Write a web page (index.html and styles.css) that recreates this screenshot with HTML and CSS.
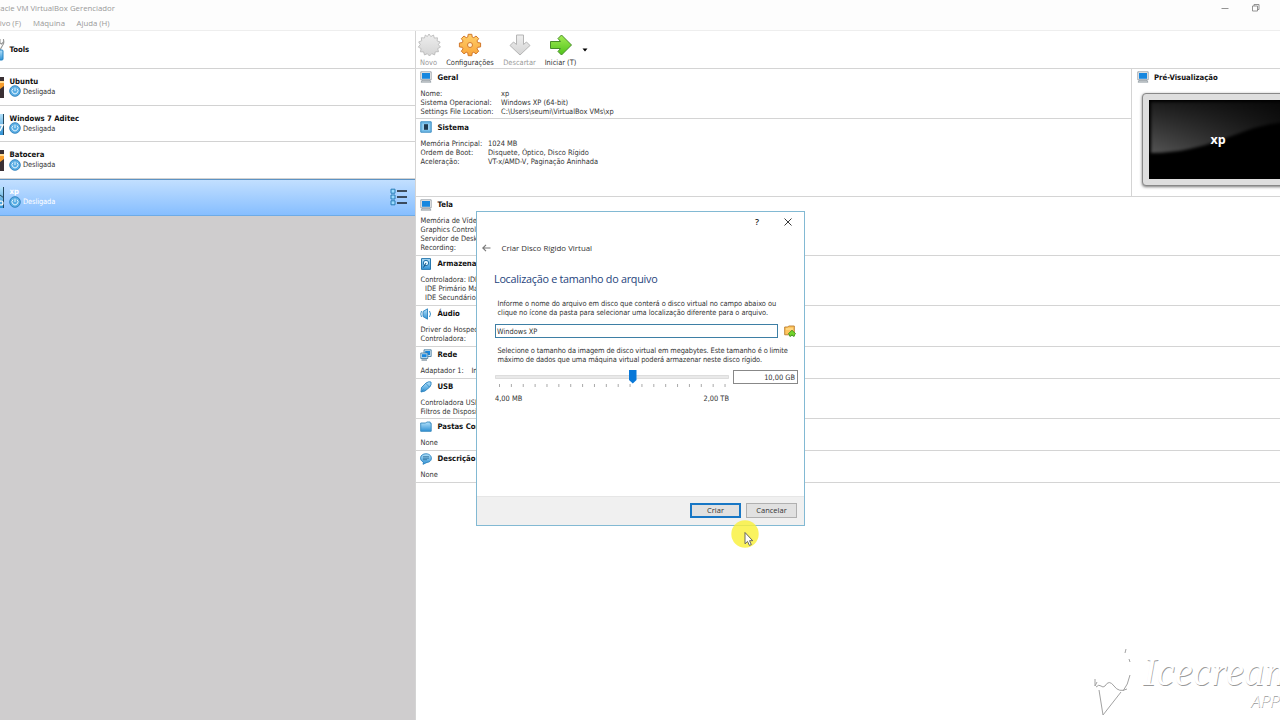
FILE: index.html
```
<!DOCTYPE html>
<html lang="pt-BR">
<head>
    <meta charset="UTF-8">
    <title>Oracle VM VirtualBox Gerenciador</title>
    <link rel="stylesheet" href="styles.css">
</head>
<body>
    <svg class="defs" width="0" height="0">
        <defs>
            <linearGradient id="blue" x1="0" y1="0" x2="0" y2="1"><stop offset="0" stop-color="#b5e2fb"/><stop offset="1" stop-color="#2f91d4"/></linearGradient>
            <linearGradient id="orange" x1="0" y1="0" x2="0" y2="1"><stop offset="0" stop-color="#ffd06b"/><stop offset="1" stop-color="#f9a53a"/></linearGradient>
            <linearGradient id="green" x1="0" y1="0" x2="0" y2="1"><stop offset="0" stop-color="#a4ec55"/><stop offset="1" stop-color="#4fc31a"/></linearGradient>
            <linearGradient id="grey" x1="0" y1="0" x2="0" y2="1"><stop offset="0" stop-color="#eee"/><stop offset="1" stop-color="#d4d4d4"/></linearGradient>
            <linearGradient id="glare" x1="0" y1="0" x2="0" y2="1"><stop offset="0" stop-color="#1c1c1c"/><stop offset="1" stop-color="#555"/></linearGradient>
            <linearGradient id="fade" x1="0" y1="0" x2="1" y2="0"><stop offset="0" stop-color="#000" stop-opacity="0"/><stop offset="1" stop-color="#000" stop-opacity=".8"/></linearGradient>
        </defs>
        <symbol id="power" viewBox="0 0 12 12">
            <circle cx="6" cy="6" r="5.3" fill="#5aaee4" stroke="#2d7fbb" stroke-width=".9"/>
            <path d="M4 3.6a3 3 0 1 0 4 0M6 2.6V6" fill="none" stroke="#e4f4ff" stroke-width="1"/>
        </symbol>
        <symbol id="monitor" viewBox="0 0 12 12">
            <path d="M.8.8h10.400v8H.8z" fill="#f4f4f4" stroke="#8a949c" stroke-width=".8"/>
            <path d="M2 2h8v5.800H2z" fill="#1787df"/>
            <path d="M2 9.300h8l1 1.900H1z" fill="#c8cdd0" stroke="#7e8a92" stroke-width=".6"/>
        </symbol>
    </svg>

    <div class="window">
        <header class="titlebar">
            <div class="title">Oracle VM VirtualBox Gerenciador</div>
            <svg class="win-buttons" width="40" height="10" viewBox="0 0 40 10"><path d="M.5 5.500h7M31.500 3h5v5h-5zM33 3V1.500h5v5h-1.500" fill="none" stroke="#888" stroke-width=".9"/></svg>
        </header>
        <nav class="menubar">
            <span class="menu-file">Arquivo (F)</span>
            <span class="menu-machine">Máquina</span>
            <span>Ajuda (H)</span>
        </nav>

        <main class="main">
            <aside class="sidebar">
                <div class="vm tools">
                    <svg class="vm-icon" width="5" height="24" viewBox="0 0 5 24"><path d="M0 1v4l1.500 1L3.500 4V1M3.500 2q1 3-1 5.500L0 12" fill="none" stroke="#999" stroke-width="1.100"/><rect x="-5" y="12" width="8" height="10" rx="1" fill="url(#blue)" stroke="#2584c4"/></svg>
                    <div class="vm-name">Tools</div>
                </div>
                <div class="vm">
                    <svg class="vm-icon" width="5" height="24" viewBox="0 0 5 24"><path d="M0 2h4v21H0z" fill="#3a3034"/><path d="M0 6h4v5L0 14z" fill="#f79d2c"/><path d="M0 6h4v2H0z" fill="#ffdc94"/></svg>
                    <div><div class="vm-name">Ubuntu</div><div class="vm-state"><svg width="12" height="12"><use href="#power"/></svg>Desligada</div></div>
                </div>
                <div class="vm">
                    <svg class="vm-icon" width="5" height="24" viewBox="0 0 5 24"><path d="M0 2h4v21H0z" fill="url(#blue)"/><path d="M3.500 2v21" stroke="#24485f"/><path d="M0 13h3l-3 6" fill="none" stroke="#fff" stroke-width="1.400"/></svg>
                    <div><div class="vm-name">Windows 7 Aditec</div><div class="vm-state"><svg width="12" height="12"><use href="#power"/></svg>Desligada</div></div>
                </div>
                <div class="vm">
                    <svg class="vm-icon" width="5" height="24" viewBox="0 0 5 24"><path d="M0 2h4v21H0z" fill="#3a3034"/><path d="M0 6h4v5L0 14z" fill="#f79d2c"/><path d="M0 6h4v2H0z" fill="#ffdc94"/></svg>
                    <div><div class="vm-name">Batocera</div><div class="vm-state"><svg width="12" height="12"><use href="#power"/></svg>Desligada</div></div>
                </div>
                <div class="vm selected">
                    <svg class="vm-icon" width="5" height="24" viewBox="0 0 5 24"><path d="M0 2h4v21H0z" fill="url(#blue)"/><path d="M3.500 2v21M0 10l4 3" stroke="#24485f"/><circle cx="1" cy="18" r="2" fill="none" stroke="#fff" stroke-width="1.200"/></svg>
                    <div><div class="vm-name">xp</div><div class="vm-state"><svg width="12" height="12"><use href="#power"/></svg>Desligada</div></div>
                    <svg class="vm-menu" width="18" height="18" viewBox="0 0 18 18"><path d="M7 3h10M7 9h10M7 15h10" stroke="#1a2028" stroke-width="1.500"/><path d="M1 1.200h4v4H1zM1 7h4v4H1zM1 12.800h4v4H1z" fill="#9bdcff" stroke="#267bb5" stroke-width="1"/></svg>
                </div>
            </aside>

            <section class="content">
                <div class="toolbar">
                    <div class="tool disabled tool-new">
                        <svg width="24" height="24" viewBox="0 0 24 24"><path d="M12 1l1.800 2.600L16.500 2l.8 3.100 3.200-.3-.4 3.100 3 1.100-1.700 2.700 2.100 2.400-2.800 1.500.8 3.100-3.200.1-.7 3.100-2.900-1.300L12.500 23l-2.200-2.300L7.500 22l-.9-3.100-3.200-.1.700-3.200-2.800-1.500 2-2.500-1.600-2.700 3-1.100-.4-3.100 3.200.3L8.300 2l2 1.600z" fill="url(#grey)" stroke="#b5b5b5" stroke-width=".8"/></svg>
                        <span>Novo</span>
                    </div>
                    <div class="tool tool-settings">
                        <svg width="24" height="24" viewBox="0 0 24 24"><path d="M9.800 4l.4-2.700h3.600l.4 2.700 1.600.7L18 3l2.700 2.600L19 7.900l.7 1.700 2.900.4v3.900l-2.900.4-.7 1.600 1.700 2.300L18 20.900l-2.200-1.700-1.600.7-.4 2.800h-3.600l-.4-2.800-1.600-.7L6 20.900l-2.700-2.700L5 15.900l-.7-1.600-2.900-.4V10l2.900-.4L5 7.900 3.300 5.600 6 3l2.200 1.700z" fill="url(#orange)" stroke="#d2782b"/><circle cx="12" cy="12" r="2.500" fill="#fff3d8" stroke="#d2782b"/></svg>
                        <span>Configurações</span>
                    </div>
                    <div class="tool disabled tool-discard">
                        <svg width="24" height="24" viewBox="0 0 24 24"><path d="M8.500 2h7v9.500l3-2.500 3.500 3.500-10 9.500-10-9.500L5.500 9l3 2.500z" fill="url(#grey)" stroke="#b5b5b5"/></svg>
                        <span>Descartar</span>
                    </div>
                    <div class="tool tool-start">
                        <svg width="24" height="24" viewBox="0 0 24 24"><path d="M1.500 8.500h10L9 5.500 12.500 2l10 10-10 10L9 18.500l2.500-3h-10z" fill="url(#green)" stroke="#478d28"/></svg>
                        <span>Iniciar (T)</span>
                    </div>
                    <svg class="tool-arrow" width="6" height="4"><path d="M.5.5h5L3 3.500z"/></svg>
                </div>

                <div class="details">
                    <div class="overview">
                        <div class="overview-left">
                            <section class="group general">
                                <h2><svg width="12" height="12"><use href="#monitor"/></svg>Geral</h2>
                                <dl class="wide">
                                    <dt>Nome:</dt><dd>xp</dd>
                                    <dt>Sistema Operacional:</dt><dd>Windows XP (64-bit)</dd>
                                    <dt>Settings File Location:</dt><dd>C:\Users\seumi\VirtualBox VMs\xp</dd>
                                </dl>
                            </section>
                            <section class="group system">
                                <h2><svg width="12" height="12" viewBox="0 0 12 12"><path d="M.8.8h10.400v10.400H.8z" fill="#78bfea" stroke="#3a8cc2"/><path d="M2.500 4h7M2.500 6h7M2.500 8h7" stroke="#d8f1ff" stroke-width=".7"/><path d="M4 3.200h4v5.600H4z" fill="#203a50"/></svg>Sistema</h2>
                                <dl>
                                    <dt>Memória Principal:</dt><dd>1024 MB</dd>
                                    <dt>Ordem de Boot:</dt><dd>Disquete, Óptico, Disco Rígido</dd>
                                    <dt>Aceleração:</dt><dd>VT-x/AMD-V, Paginação Aninhada</dd>
                                </dl>
                            </section>
                        </div>
                        <section class="group preview">
                            <h2><svg width="12" height="12"><use href="#monitor"/></svg>Pré-Visualização</h2>
                            <div class="screen-frame">
                                <div class="screen">
                                    <svg class="screen-glare" width="150" height="78" viewBox="0 0 150 78"><path d="M2 2H150V22C95 20 70 53 2 53z" fill="url(#glare)"/><path d="M0 0h150v78H0z" fill="url(#fade)"/></svg>
                                    <span>xp</span>
                                </div>
                            </div>
                        </section>
                    </div>
                    <section class="group">
                        <h2><svg width="12" height="12"><use href="#monitor"/></svg>Tela</h2>
                        <p>Memória de Vídeo:</p><p>Graphics Controller:</p><p>Servidor de Desktop Remoto:</p><p>Recording:</p>
                    </section>
                    <section class="group">
                        <h2><svg width="12" height="12" viewBox="0 0 12 12"><path d="M1.500.6h9v10.800h-9z" fill="url(#blue)" stroke="#2878ae"/><circle cx="6" cy="5" r="2.700" fill="#dff4ff" stroke="#1e72ac"/><path d="M6 5l-2.500 4.500" stroke="#154f7c"/></svg>Armazenamento</h2>
                        <p>Controladora: IDE</p><p class="child">IDE Primário Master:</p><p class="child">IDE Secundário Master:</p>
                    </section>
                    <section class="group">
                        <h2><svg width="12" height="12" viewBox="0 0 12 12"><path d="M3 3.500L7.500.8v10.400L3 8.500z" fill="url(#blue)" stroke="#2b82bd" stroke-width=".9"/><path d="M1.500 3q-1.500 3 0 6M9.500 3q2 3 0 6" fill="none" stroke="#3d93ca"/></svg>Áudio</h2>
                        <p>Driver do Hospedeiro:</p><p>Controladora:</p>
                    </section>
                    <section class="group">
                        <h2><svg width="12" height="12" viewBox="0 0 12 12"><path d="M4 .8h7.200v6.700H4z" fill="#cfe6f3" stroke="#3c7499" stroke-width=".8"/><path d="M5.200 2h4.800v4H5.200z" fill="#1787df"/><path d="M.8 4h7v5.500h-7z" fill="#cfe6f3" stroke="#3c7499" stroke-width=".8"/><path d="M2 5.200h4.600v3H2z" fill="#1787df"/><path d="M1.500 11h5.500" stroke="#526d7f"/></svg>Rede</h2>
                        <p>Adaptador 1: &nbsp;&thinsp; Intel PRO/1000</p>
                    </section>
                    <section class="group">
                        <h2><svg width="12" height="12" viewBox="0 0 12 12"><path d="M1 11l.5-4.500L6 2q3-2 5-1 .7 2.500-1.200 5L5 10z" fill="url(#blue)" stroke="#2b82bd" stroke-width=".9"/><path d="M6 2.500l3.300 3.500M1 11l2.500-2.500" stroke="#2b82bd" stroke-width=".7"/></svg>USB</h2>
                        <p>Controladora USB:</p><p>Filtros de Dispositivo:</p>
                    </section>
                    <section class="group">
                        <h2><svg width="12" height="12" viewBox="0 0 12 12"><path d="M.7 10.300V2h5l1-1h3.500v1.300h1v8z" fill="url(#blue)" stroke="#3488bd" stroke-width=".9"/></svg>Pastas Compartilhadas</h2>
                        <p>None</p>
                    </section>
                    <section class="group">
                        <h2><svg width="12" height="12" viewBox="0 0 12 12"><path d="M6 .8c7 0 7 8.400 1 8.600L3 11.300l.5-2.200C-1 7.500-.5.8 6 .8z" fill="url(#blue)" stroke="#2b82bd" stroke-width=".9"/><path d="M3 3.700h6M3 5.200h6M3 6.700h4" stroke="#266894" stroke-width=".7"/></svg>Descrição</h2>
                        <p>None</p>
                    </section>
                </div>
            </section>
        </main>
    </div>

    <div class="dialog">
        <div class="dialog-controls">
            <span>?</span>
            <svg width="8" height="8" viewBox="0 0 8 8"><path d="M.5.5l7 7M7.500.5l-7 7" stroke="#222" stroke-width=".9"/></svg>
        </div>
        <div class="dialog-title">
            <svg width="9" height="8" viewBox="0 0 9 8"><path d="M8.500 4H1M4 .8L.8 4 4 7.200" fill="none" stroke="#777" stroke-width="1.100"/></svg>
            <span>Criar Disco Rígido Virtual</span>
        </div>
        <div class="dialog-body">
            <h1>Localização e tamanho do arquivo</h1>
            <p class="path-help">Informe o nome do arquivo em disco que conterá o disco virtual no campo abaixo ou<br>clique no ícone da pasta para selecionar uma localização diferente para o arquivo.</p>
            <div class="path-row">
                <div class="path-input">Windows XP</div>
                <svg width="12" height="12" viewBox="0 0 12 12"><path d="M.7 9.800V2h3l1-1h5.600v8.800z" fill="#ffc65e" stroke="#b97b2d" stroke-width=".9"/><path d="M2 4h7" stroke="#ffe7a5"/><path d="M8 5.200l3.600 3.500-1 .9-.3 1.600H9l-1-1.400-1 1.400H5.700l-.3-1.600-1-.9z" fill="#72d42c" stroke="#378b19" stroke-width=".8"/></svg>
            </div>
            <p class="size-help">Selecione o tamanho da imagem de disco virtual em megabytes. Este tamanho é o limite<br>máximo de dados que uma máquina virtual poderá armazenar neste disco rígido.</p>
            <div class="size-row">
                <div class="slider">
                    <svg width="234" height="18" viewBox="0 0 234 18"><path d="M.5 5.500h233v3H.5z" fill="#e9e9e9" stroke="#d2d2d2" stroke-width=".7"/><path d="M4 15.500h228" stroke="#aaa" stroke-width="3" stroke-dasharray="1 10.870"/><path d="M134 0h7.500v10L137.800 13.500 134 10z" fill="#0878d8"/></svg>
                    <div class="slider-labels"><span>4,00 MB</span><span>2,00 TB</span></div>
                </div>
                <div class="size-input">10,00 GB</div>
            </div>
        </div>
        <div class="dialog-footer">
            <div class="button default">Criar</div>
            <div class="button">Cancelar</div>
        </div>
    </div>

    <svg class="pointer" width="28" height="28" viewBox="0 0 28 28"><circle cx="14" cy="14" r="13.700" fill="#f9f03b" opacity=".82"/><path d="M14 12.500v11.300l2.500-2.400 1.900 4 1.900-.8-1.800-3.900h3.200z" fill="#fff" stroke="#555" stroke-width=".9"/></svg>

    <div class="watermark">
        <svg width="42" height="70" viewBox="0 0 42 70"><path d="M2 31v7l2-4M3 39q3-3 5-1t4 0q4-7 9 0t13 3M6 42l4 25 18-23M30 43q5-6 7-16M33 1l-1 4M36 11l1 3" fill="none" stroke="#a2a2a2" stroke-width="1"/></svg>
        <div class="brand"><div class="brand-name">Icecream</div><div class="brand-sub">APPS</div></div>
    </div>
</body>
</html>
```
FILE: styles.css
```
* {
    box-sizing: border-box;
}
body {
    margin: 0;
    width: 1280px;
    height: 720px;
    overflow: hidden;
    position: relative;
    font-family: "DejaVu Sans Condensed", "DejaVu Sans", sans-serif;
    font-stretch: condensed;
    font-size: 7.4px;
    line-height: 9px;
    color: #333;
    background: #fff;
    white-space: nowrap;
}
h1, h2, p, dl, dd {
    margin: 0;
}
svg {
    display: block;
    flex: none;
}
.defs {
    position: absolute;
}
.titlebar, .menubar, .screen span, .dialog-controls, .dialog-title, .dialog-body h1, .button, .brand-sub {
    font-family: "Open Sans", sans-serif;
    font-stretch: normal;
}
.window {
    height: 720px;
    display: flex;
    flex-direction: column;
}
.titlebar {
    height: 16px;
    display: flex;
    justify-content: space-between;
    align-items: center;
    background: #fdfdfd;
    color: #999;
    font-size: 7.8px;
}
.title {
    width: 115px;
    display: flex;
    justify-content: flex-end;
}
.win-buttons {
    margin-right: 19px;
}
.menubar {
    height: 15px;
    display: flex;
    align-items: center;
    background: #fdfdfd;
    border-bottom: 1px solid #eee;
    color: #999;
    font-size: 7.8px;
}
.menu-file {
    width: 21px;
    display: flex;
    justify-content: flex-end;
}
.menu-machine {
    width: 43.5px;
    margin-left: 12px;
}
.main {
    flex: 1;
    display: flex;
    min-height: 0;
}
.sidebar {
    width: 416px;
    flex: none;
    background: #cfcdce;
    border-right: 1px solid #d4d4d4;
}
.vm {
    height: 36.7px;
    display: flex;
    align-items: center;
    background: #fff;
    border-bottom: 1px solid #d2d2d2;
}
.tools {
    height: 38px;
}
.vm-icon {
    width: 5px;
    margin-right: 4.5px;
}
.vm-name {
    font-size: 7.7px;
    font-weight: bold;
    color: #111;
}
.vm-state {
    display: flex;
    align-items: center;
    gap: 2px;
    height: 11px;
    letter-spacing: -0.08px;
}
.vm-state svg {
    margin-left: -0.5px;
}
.selected {
    background: linear-gradient(#c2dfff, #86beff);
    border-top: 1px solid #5d93c4;
    border-bottom-color: #6eabe6;
    color: #fff;
}
.selected .vm-name {
    color: #fff;
}
.vm-menu {
    margin-left: auto;
    margin-right: 7px;
}
.content {
    flex: 1;
    min-width: 0;
}
.toolbar {
    height: 38px;
    display: flex;
    border-bottom: 1px solid #d4d4d4;
}
.tool {
    display: flex;
    flex-direction: column;
    align-items: center;
    padding-top: 2px;
}
.tool span {
    margin-top: 1px;
}
.tool-new {
    width: 25px;
}
.tool-settings {
    width: 58px;
}
.tool-discard {
    width: 41px;
}
.tool-start {
    width: 41px;
}
.disabled {
    color: #999;
}
.tool-arrow {
    margin: 17px 0 0 1px;
}
.details {
    display: grid;
    grid-template-rows: 128px 59px 50px 41px 32px 40px 32px 32px;
}
.overview {
    display: flex;
    border-bottom: 1px solid #d4d4d4;
}
.overview-left {
    width: 716px;
    display: grid;
    grid-template-rows: 50px 1fr;
    border-right: 1px solid #d4d4d4;
}
.group {
    padding-left: 4.5px;
    border-bottom: 1px solid #d4d4d4;
}
.group h2 {
    height: 15px;
    margin-bottom: 4px;
    display: flex;
    align-items: center;
    gap: 5.5px;
    font-size: 7.7px;
    color: #111;
}
.group h2 svg {
    margin-left: -0.5px;
}
.group p, .group dt, .group dd {
    height: 9px;
}
.group .child {
    padding-left: 4.5px;
}
.group dl {
    display: grid;
    grid-template-columns: 67.5px 1fr;
}
.group .wide {
    grid-template-columns: 80.5px 1fr;
}
.overview h2 {
    height: 16px;
}
.system, .preview {
    border-bottom: none;
}
.preview {
    flex: 1;
    padding-left: 5px;
    overflow: hidden;
}
.screen-frame {
    width: 170px;
    height: 93px;
    margin: 8px 0 0 5px;
    padding: 6px;
    background: #dedede;
    border: 1px solid #888;
    border-radius: 4px;
    box-shadow: 0 1px 3px #777;
}
.screen {
    height: 79px;
    display: grid;
    background: #000;
    overflow: hidden;
}
.screen-glare, .screen span {
    grid-area: 1 / 1;
}
.screen-glare {
    filter: blur(1.5px);
}
.screen span {
    width: 138px;
    align-self: center;
    text-align: center;
    color: #fff;
    font-size: 12.5px;
    font-weight: bold;
    z-index: 1;
}
.dialog {
    position: absolute;
    left: 476px;
    top: 211px;
    width: 329px;
    height: 315px;
    display: flex;
    flex-direction: column;
    background: #fff;
    border: 1px solid #82b9d3;
}
.dialog-controls {
    height: 19px;
    display: flex;
    justify-content: flex-end;
    align-items: center;
    gap: 25px;
    padding-right: 12px;
    color: #222;
    font-size: 9px;
    font-weight: 600;
}
.dialog-title {
    height: 35px;
    display: flex;
    align-items: center;
    gap: 10.5px;
    padding-left: 5px;
    font-size: 7.9px;
}
.dialog-title svg {
    margin-bottom: 2px;
}
.dialog-body {
    flex: 1;
    padding-left: 18px;
}
.dialog-body h1 {
    margin: 6px 0 0 -1px;
    font-size: 10.8px;
    letter-spacing: -0.26px;
    font-weight: normal;
    line-height: 14px;
    color: #25437c;
}
.path-help {
    margin: 13px 0 0 2.5px;
    letter-spacing: -0.055px;
}
.path-row {
    display: flex;
    align-items: center;
    gap: 6px;
    margin-top: 7px;
}
.path-input {
    width: 283px;
    height: 14px;
    padding: 2px 1px;
    border: 1px solid #3e7fa5;
}
.size-help {
    margin: 8px 0 0 2.5px;
    letter-spacing: -0.1px;
}
.size-row {
    display: flex;
    gap: 4px;
    margin-top: 6px;
}
.slider {
    width: 234px;
}
.slider-labels {
    display: flex;
    justify-content: space-between;
    margin-top: 6px;
}
.size-input {
    width: 65px;
    height: 14px;
    padding: 2px 2px;
    border: 1px solid #888;
    text-align: right;
}
.dialog-footer {
    height: 29px;
    display: flex;
    justify-content: flex-end;
    gap: 5px;
    padding: 6px 7px 0 0;
    background: #f0f0f0;
    border-top: 1px solid #e6e6e6;
}
.button {
    width: 51px;
    height: 15px;
    display: flex;
    align-items: center;
    justify-content: center;
    background: #e1e1e1;
    border: 1px solid #b0b0b0;
    font-size: 7.5px;
}
.default {
    border: 2px solid #1877c5;
}
.pointer {
    position: absolute;
    left: 731px;
    top: 520px;
}
.watermark {
    position: absolute;
    left: 1093px;
    top: 648px;
    width: 187px;
    display: flex;
    gap: 8px;
    overflow: hidden;
    color: #fff;
}
.brand {
    flex: none;
    padding-top: 5px;
    text-shadow: .6px .8px .5px #999;
}
.brand-name {
    font-family: "Liberation Serif", serif;
    font-size: 40px;
    font-style: italic;
    line-height: 38px;
    letter-spacing: .5px;
}
.brand-sub {
    padding-left: 108px;
    font-size: 17px;
    font-style: italic;
    font-weight: 300;
    line-height: 19px;
}
```
